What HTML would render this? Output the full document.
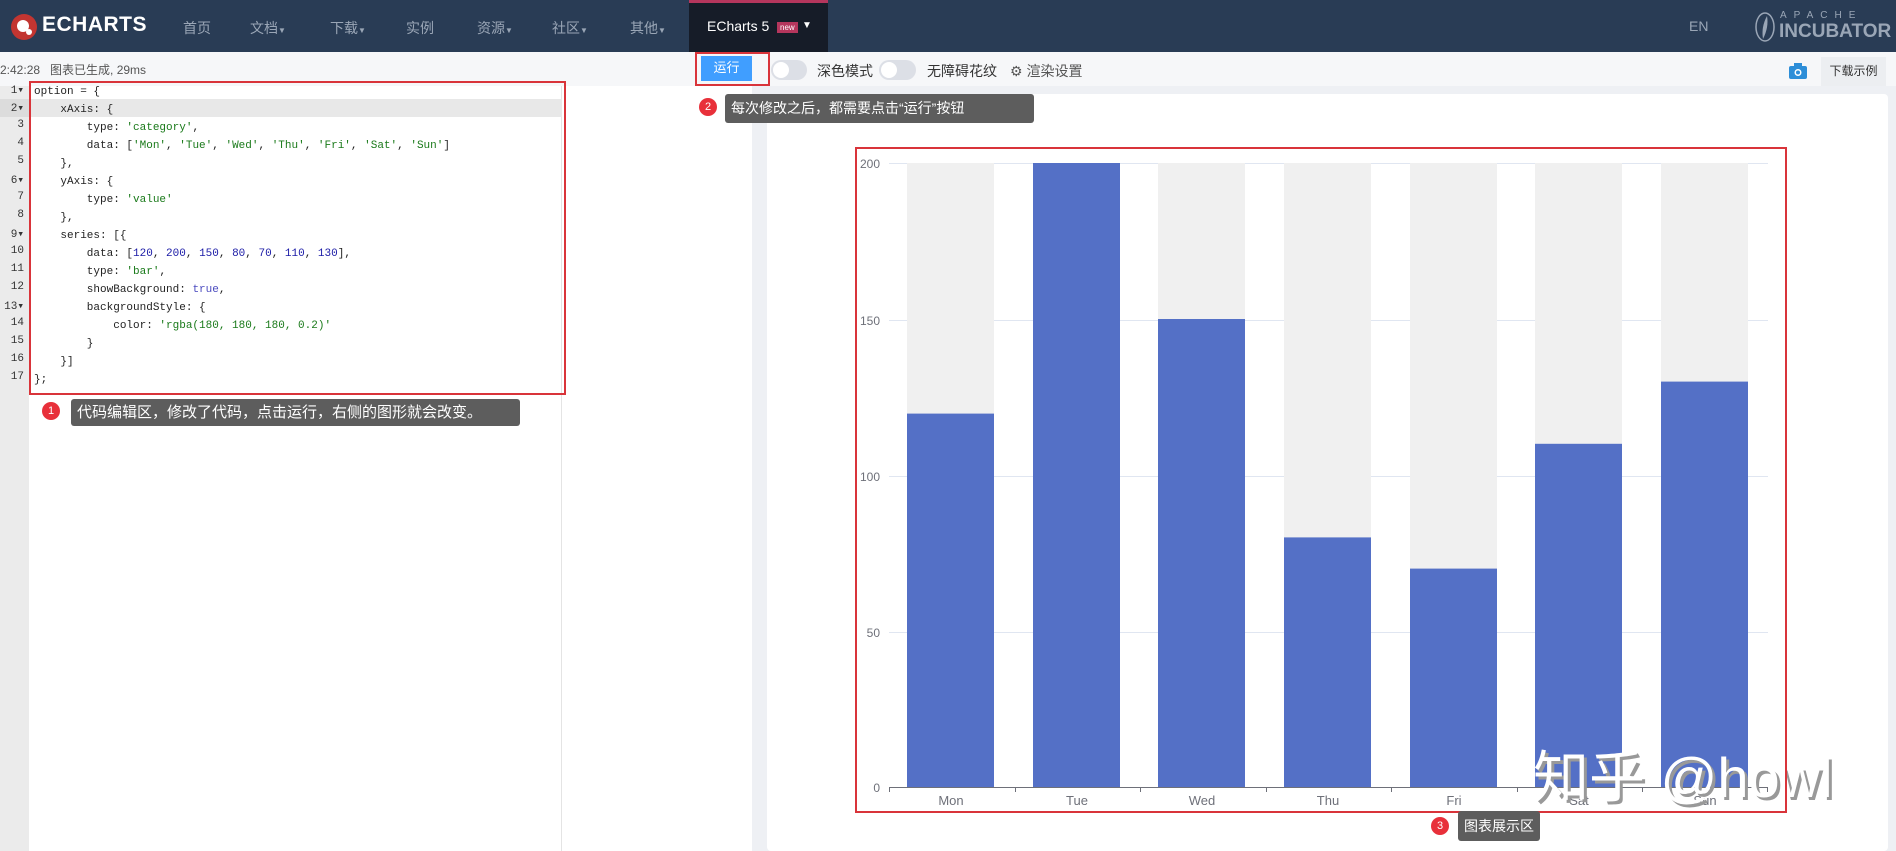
<!DOCTYPE html>
<html><head><meta charset="utf-8">
<style>
*{margin:0;padding:0;box-sizing:border-box}
body{width:1896px;height:851px;overflow:hidden;background:#fff;font-family:"Liberation Sans","Noto Sans CJK SC",sans-serif;position:relative}
.abs{position:absolute}
.nav{left:0;top:0;width:1896px;height:52px;background:#293c55}
.nav .it{position:absolute;top:18px;color:#9aa6b6;font-size:14px}
.car{font-size:8px}
.tab5{left:689px;top:0;width:139px;height:52px;background:#161c28;border-top:3px solid #b5365d}
.code{font-family:"Liberation Mono",monospace;font-size:11px;color:#222;white-space:pre}
.ln{position:absolute;left:0;width:24px;text-align:right;font-family:"Liberation Mono",monospace;font-size:11px;color:#333}
.s{color:#1a7a1a}.n{color:#1a1aa6}.k{color:#4b4bbf}
.tip{background:#5d5d5d;color:#fff;font-size:14px;border-radius:3px;padding:0 6px;line-height:27px}
.badge{width:18px;height:18px;border-radius:50%;background:#e8303a;color:#fff;font-size:11px;text-align:center;line-height:18px}
.rb{border:2.5px solid #d9343a}
</style></head><body>
<div class="abs nav">
  <svg class="abs" style="left:10px;top:13px" width="28" height="28" viewBox="0 0 28 28"><circle cx="14" cy="14" r="13" fill="#c23531"/><circle cx="13" cy="13" r="6" fill="#fff"/><circle cx="19" cy="19" r="3" fill="#fff"/></svg>
  <div class="abs" style="left:42px;top:13px;color:#fff;font-size:21px;font-weight:bold;letter-spacing:0.5px">ECHARTS</div>
  <div class="it" style="left:183px">首页</div>
  <div class="it" style="left:250px">文档<span class="car">▼</span></div>
  <div class="it" style="left:330px">下载<span class="car">▼</span></div>
  <div class="it" style="left:406px">实例</div>
  <div class="it" style="left:477px">资源<span class="car">▼</span></div>
  <div class="it" style="left:552px">社区<span class="car">▼</span></div>
  <div class="it" style="left:630px">其他<span class="car">▼</span></div>
  <div class="abs tab5"><span class="abs" style="left:18px;top:15px;color:#fff;font-size:14px">ECharts 5</span><span class="abs" style="left:88px;top:19px;background:#b5365d;color:#fff;font-size:8px;padding:1px 3px">new</span><span class="abs" style="left:113px;top:17px;color:#fff;font-size:10px">▼</span></div>
  <div class="it" style="left:1689px">EN</div>
  <svg class="abs" style="left:1754px;top:11px" width="22" height="32" viewBox="0 0 22 32"><ellipse cx="11" cy="16" rx="9" ry="14" fill="none" stroke="#9aa6b6" stroke-width="1.5"/><path d="M13 5 Q7 16 9 28 Q15 16 13 5Z" fill="#9aa6b6"/></svg>
  <div class="abs" style="left:1780px;top:10px;color:#9aa6b6;font-size:10px;letter-spacing:7px">APACHE</div>
  <div class="abs" style="left:1779px;top:21px;color:#9aa6b6;font-size:19px;font-weight:bold">INCUBATOR</div>
</div>
<div class="abs" style="left:0;top:52px;width:1896px;height:34px;background:#f6f7f9"></div>
<div class="abs" style="left:0;top:61px;font-size:12px;color:#555">2:42:28 &nbsp;&nbsp;图表已生成, 29ms</div>
<div class="abs" style="left:701px;top:56px;width:51px;height:25px;background:#409eff;color:#fff;font-size:13px;text-align:center;line-height:24px">运行</div>
<div class="abs rb" style="left:695px;top:52px;width:75px;height:34px"></div>
<div class="abs" style="left:771px;top:60px;width:36px;height:20px;border-radius:10px;background:#dcdfe6"><div class="abs" style="left:2px;top:2px;width:16px;height:16px;border-radius:50%;background:#fff"></div></div>
<div class="abs" style="left:817px;top:61px;font-size:14px;color:#333">深色模式</div>
<div class="abs" style="left:879px;top:60px;width:37px;height:20px;border-radius:10px;background:#dcdfe6"><div class="abs" style="left:2px;top:2px;width:16px;height:16px;border-radius:50%;background:#fff"></div></div>
<div class="abs" style="left:927px;top:61px;font-size:14px;color:#333">无障碍花纹</div>
<div class="abs" style="left:1010px;top:61px;font-size:14px;color:#555">⚙ 渲染设置</div>
<svg class="abs" style="left:1789px;top:63px" width="18" height="16" viewBox="0 0 18 16"><rect x="0" y="3" width="18" height="13" rx="2" fill="#2d8ed8"/><rect x="5" y="0" width="8" height="4" fill="#2d8ed8"/><circle cx="9" cy="9.5" r="3.5" fill="#fff"/><circle cx="9" cy="9.5" r="2" fill="#2d8ed8"/></svg>
<div class="abs" style="left:1821px;top:57px;width:65px;height:29px;background:#eceef1;font-size:12px;color:#333;text-align:center;line-height:29px">下载示例</div>
<div class="abs" style="left:0;top:86px;width:29px;height:765px;background:#ebebeb"></div>
<div class="abs" style="left:561px;top:86px;width:1px;height:765px;background:#e4e4e4"></div>
<div class="abs" style="left:0;top:99px;width:562px;height:18px;background:#e8e8e8"></div>
<div class="abs" style="left:0;top:99px;width:29px;height:18px;background:#dcdcdc"></div>
<div class="abs" style="left:0;top:83px">
<div class="ln" style="top:0">1▾</div><div class="ln" style="top:18px">2▾</div><div class="ln" style="top:36px">3 </div><div class="ln" style="top:54px">4 </div><div class="ln" style="top:72px">5 </div><div class="ln" style="top:90px">6▾</div><div class="ln" style="top:108px">7 </div><div class="ln" style="top:126px">8 </div><div class="ln" style="top:144px">9▾</div><div class="ln" style="top:162px">10 </div><div class="ln" style="top:180px">11 </div><div class="ln" style="top:198px">12 </div><div class="ln" style="top:216px">13▾</div><div class="ln" style="top:234px">14 </div><div class="ln" style="top:252px">15 </div><div class="ln" style="top:270px">16 </div><div class="ln" style="top:288px">17 </div>
</div>
<div class="abs code" style="left:34px;top:83px;line-height:18px">option = {
    xAxis: {
        type: <span class="s">'category'</span>,
        data: [<span class="s">'Mon'</span>, <span class="s">'Tue'</span>, <span class="s">'Wed'</span>, <span class="s">'Thu'</span>, <span class="s">'Fri'</span>, <span class="s">'Sat'</span>, <span class="s">'Sun'</span>]
    },
    yAxis: {
        type: <span class="s">'value'</span>
    },
    series: [{
        data: [<span class="n">120</span>, <span class="n">200</span>, <span class="n">150</span>, <span class="n">80</span>, <span class="n">70</span>, <span class="n">110</span>, <span class="n">130</span>],
        type: <span class="s">'bar'</span>,
        showBackground: <span class="k">true</span>,
        backgroundStyle: {
            color: <span class="s">'rgba(180, 180, 180, 0.2)'</span>
        }
    }]
};</div>
<div class="abs rb" style="left:29px;top:81px;width:537px;height:314px"></div>
<div class="abs badge" style="left:42px;top:402px">1</div>
<div class="abs tip" style="left:71px;top:399px;width:449px;font-size:15px">代码编辑区，修改了代码，点击运行，右侧的图形就会改变。</div>
<div class="abs" style="left:752px;top:86px;width:1144px;height:765px;background:#eef0f4"></div>
<div class="abs" style="left:767px;top:94px;width:1121px;height:757px;background:#fff;border-radius:4px"></div>
<svg class="abs" style="left:767px;top:94px" width="1121" height="757" viewBox="767 94 1121 757" font-family="Liberation Sans, sans-serif">
<g stroke="#e0e6f1" stroke-width="1"><line x1="889" x2="1768" y1="163.5" y2="163.5"/><line x1="889" x2="1768" y1="320.5" y2="320.5"/><line x1="889" x2="1768" y1="476.5" y2="476.5"/><line x1="889" x2="1768" y1="632.5" y2="632.5"/></g>
<g fill="#f0f0f0"><rect x="907" y="163" width="87" height="624"/><rect x="1033" y="163" width="87" height="624"/><rect x="1158" y="163" width="87" height="624"/><rect x="1284" y="163" width="87" height="624"/><rect x="1410" y="163" width="87" height="624"/><rect x="1535" y="163" width="87" height="624"/><rect x="1661" y="163" width="87" height="624"/></g>
<g fill="#5470c6"><rect x="907" y="413.6" width="87" height="373.4"/><rect x="1033" y="163" width="87" height="624"/><rect x="1158" y="319" width="87" height="468"/><rect x="1284" y="537.4" width="87" height="249.6"/><rect x="1410" y="568.6" width="87" height="218.4"/><rect x="1535" y="443.8" width="87" height="343.2"/><rect x="1661" y="381.6" width="87" height="405.4"/></g>
<g stroke="#6e7079" stroke-width="1"><line x1="889" x2="1768" y1="787.5" y2="787.5"/><line x1="889.5" x2="889.5" y1="787" y2="792"/><line x1="1015.5" x2="1015.5" y1="787" y2="792"/><line x1="1140.5" x2="1140.5" y1="787" y2="792"/><line x1="1266.5" x2="1266.5" y1="787" y2="792"/><line x1="1391.5" x2="1391.5" y1="787" y2="792"/><line x1="1517.5" x2="1517.5" y1="787" y2="792"/><line x1="1642.5" x2="1642.5" y1="787" y2="792"/><line x1="1767.5" x2="1767.5" y1="787" y2="792"/></g>
<g fill="#6e7079" font-size="12" text-anchor="end"><text x="880" y="168">200</text><text x="880" y="325">150</text><text x="880" y="481">100</text><text x="880" y="637">50</text><text x="880" y="792">0</text></g>
<g fill="#6e7079" font-size="13" text-anchor="middle"><text x="951" y="805">Mon</text><text x="1077" y="805">Tue</text><text x="1202" y="805">Wed</text><text x="1328" y="805">Thu</text><text x="1454" y="805">Fri</text><text x="1579" y="805">Sat</text><text x="1705" y="805">Sun</text></g>
<text x="1536" y="800" font-size="56" fill="#999" font-family="Liberation Sans, Noto Sans CJK SC, sans-serif">知乎 @howl</text>
<text x="1533" y="797" font-size="56" fill="#fff" font-family="Liberation Sans, Noto Sans CJK SC, sans-serif">知乎 @howl</text>
</svg>
<div class="abs rb" style="left:855px;top:147px;width:932px;height:666px"></div>
<div class="abs badge" style="left:699px;top:98px">2</div>
<div class="abs tip" style="left:725px;top:94px;width:309px;height:29px;line-height:29px">每次修改之后，都需要点击“运行”按钮</div>
<div class="abs badge" style="left:1431px;top:817px">3</div>
<div class="abs tip" style="left:1458px;top:811px;height:30px;line-height:30px">图表展示区</div>
</body></html>
